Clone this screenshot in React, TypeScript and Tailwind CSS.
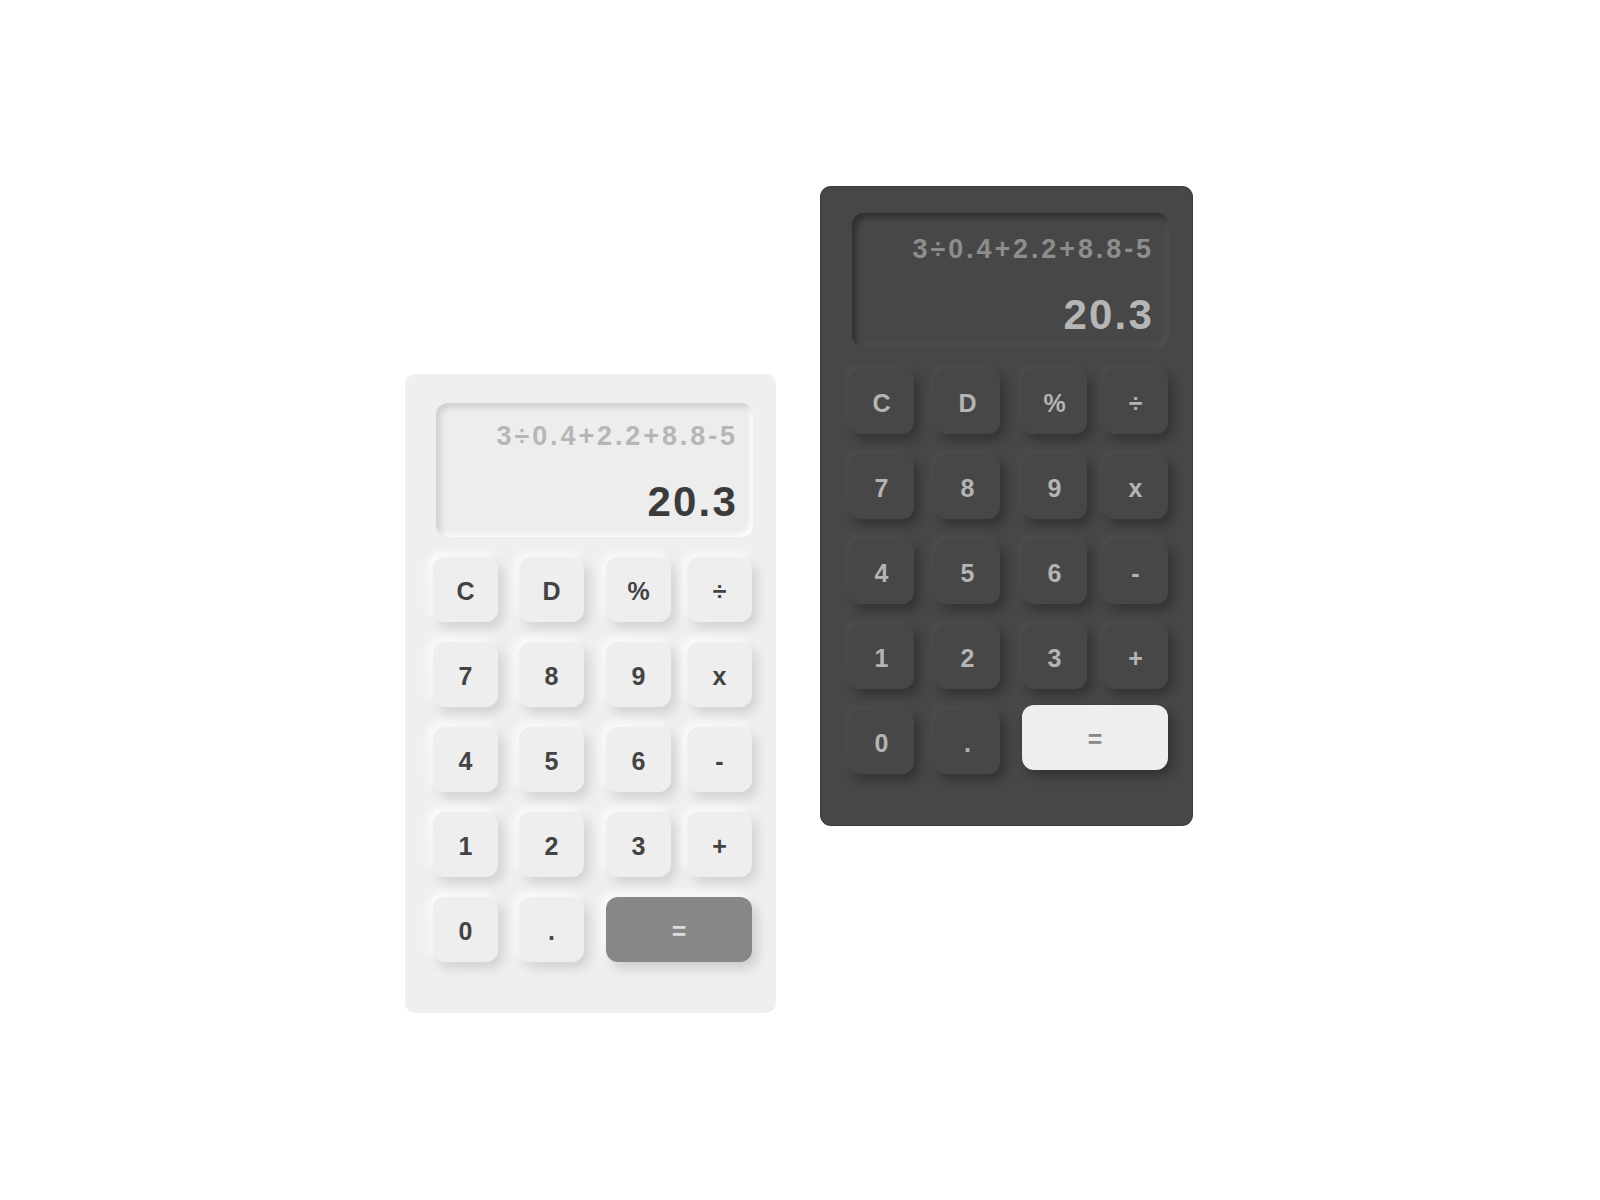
import React from 'react'

type Theme = 'light' | 'dark'

const KEYS: { label: string; wide?: boolean; accent?: boolean }[] = [
  { label: 'C' },
  { label: 'D' },
  { label: '%' },
  { label: '÷' },
  { label: '7' },
  { label: '8' },
  { label: '9' },
  { label: 'x' },
  { label: '4' },
  { label: '5' },
  { label: '6' },
  { label: '-' },
  { label: '1' },
  { label: '2' },
  { label: '3' },
  { label: '+' },
  { label: '0' },
  { label: '.' },
  { label: '=', wide: true, accent: true },
]

const styles = {
  light: {
    card: 'h-[639px] pt-[29px] bg-[#efefef]',
    display:
      'pt-[20px] bg-[#ededed] shadow-[inset_4px_4px_6px_rgba(0,0,0,0.13),inset_-3px_-3px_5px_rgba(255,255,255,0.9)]',
    expr: 'text-[#b6b6b6]',
    result: 'text-[#3b3b3b]',
    grid: 'mt-[20px]',
    key: 'bg-[#eeeeee] text-[#434343] shadow-[5px_6px_12px_rgba(0,0,0,0.13),-4px_-4px_10px_rgba(255,255,255,0.9)]',
    accent: 'bg-[#878787] text-[#dcdcdc] shadow-[5px_6px_12px_rgba(0,0,0,0.15),-4px_-4px_10px_rgba(255,255,255,0.9)]',
  },
  dark: {
    card: 'h-[638px] pt-[26px] bg-[#474747] ring-1 ring-[#3b3b3b]',
    display:
      'pt-[23px] bg-[#474747] shadow-[inset_4px_4px_6px_rgba(0,0,0,0.35),inset_-3px_-3px_5px_rgba(255,255,255,0.06)]',
    expr: 'text-[#8d8d8d]',
    result: 'text-[#b6b6b6]',
    grid: 'mt-[22px]',
    key: 'bg-[#474747] text-[#b4b4b4] shadow-[5px_6px_12px_rgba(0,0,0,0.3),-3px_-3px_8px_rgba(255,255,255,0.05)]',
    accent: 'bg-[#eeeeee] text-[#888888] -translate-y-[4px] shadow-[5px_6px_12px_rgba(0,0,0,0.3)]',
  },
}

function Calculator({ theme, className = '' }: { theme: Theme; className?: string }) {
  const s = styles[theme]
  return (
    <div className={`w-[371px] shrink-0 rounded-[10px] pl-[28px] pr-[23px] ${s.card} ${className}`}>
      {/* Screen */}
      <div className={`ml-[3px] flex h-[134px] w-[317px] flex-col items-end rounded-[12px] pr-[15px] ${s.display}`}>
        <p className={`text-[27px] font-bold leading-none tracking-[2.9px] ${s.expr}`}>3÷0.4+2.2+8.8-5</p>
        <p className={`mt-[31px] text-[42px] font-bold leading-none tracking-[2.2px] ${s.result}`}>20.3</p>
      </div>

      {/* Keypad: the last column sits a little closer than the others */}
      <div className={`grid grid-cols-[86px_87px_81px_65px] auto-rows-[65px] gap-y-[20px] ${s.grid}`}>
        {KEYS.map((k) => (
          <button
            key={k.label}
            className={`flex items-center justify-center rounded-[12px] pt-[3px] text-[25px] font-bold leading-none ${
              k.wide ? 'col-span-2' : 'w-[65px]'
            } ${k.accent ? s.accent : s.key}`}
          >
            {k.label}
          </button>
        ))}
      </div>
    </div>
  )
}

export default function App() {
  return (
    <div className="min-h-[1200px] w-full bg-white font-['Liberation_Sans',Arial,sans-serif]">
      <div className="flex items-start gap-[45px] pl-[405px] pt-[187px]">
        <Calculator theme="light" className="mt-[187px]" />
        <Calculator theme="dark" />
      </div>
    </div>
  )
}
